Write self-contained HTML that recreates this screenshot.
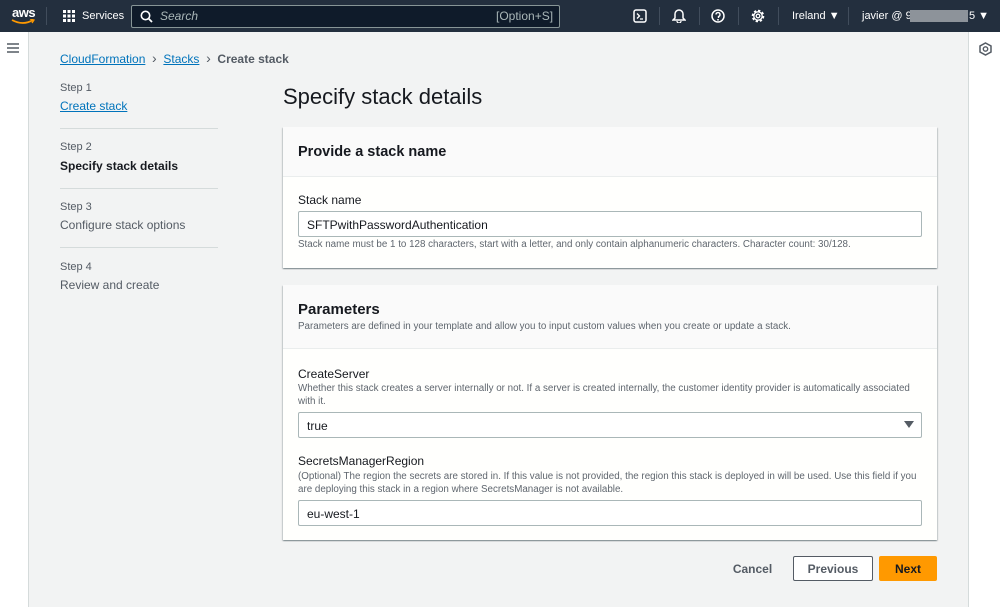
<!DOCTYPE html>
<html><head><style>
*{box-sizing:border-box;margin:0;padding:0}
body{width:1000px;height:607px;overflow:hidden;font-family:"Liberation Sans",sans-serif;background:#f2f3f3;position:relative;color:#16191f}
.nav{position:absolute;left:0;top:0;width:1000px;height:32px;background:#232f3e;color:#fff;font-size:11px}
.abs{position:absolute}
.sep{position:absolute;top:7px;width:1px;height:18px;background:#414d5c}
.ls{position:absolute;left:0;top:32px;width:29px;height:575px;background:#fff;border-right:1px solid #d5dbdb}
.rs{position:absolute;left:968px;top:32px;width:32px;height:575px;background:#fff;border-left:1px solid #d5dbdb}
a{color:#0073bb;text-decoration:underline}
.step{position:absolute;left:60px;font-size:11px;color:#545b64}
.sn{position:absolute;left:60px;font-size:12px;color:#545b64}
.div{position:absolute;left:60px;width:158px;height:1px;background:#d5dbdb}
.card{position:absolute;left:283px;width:654px;background:#fffffd;box-shadow:0 1px 1px rgba(0,28,36,.3),1px 1px 1px rgba(0,28,36,.15),-1px 1px 1px rgba(0,28,36,.15)}
.hd{background:#fafafa;border-bottom:1px solid #eaeded}
.lbl{position:absolute;left:15px;font-size:12px;color:#16191f}
.hlp{position:absolute;left:15px;font-size:9.8px;color:#5f666e;line-height:12.5px;width:625px}
.inp{position:absolute;left:15px;width:624px;height:26px;border:1px solid #aab7b8;border-radius:2px;background:#fff;font-size:12px;padding:6px 8px}
.btn{position:absolute;top:556px;height:25px;font-size:12px;font-weight:bold;text-align:center;line-height:27px;border-radius:2px}
</style></head><body>
<div class="nav">
  <div class="abs" style="left:12px;top:5px;font-size:13px;font-weight:bold;letter-spacing:-0.5px">aws</div>
  <svg class="abs" style="left:11px;top:19px" width="24" height="6"><path d="M1 1 Q12 7 22 1" stroke="#ff9900" stroke-width="1.8" fill="none"/><path d="M19 0 L23 1 L21 4" stroke="#ff9900" stroke-width="1.3" fill="none"/></svg>
  <div class="sep" style="left:46px"></div>
  <svg class="abs" style="left:63px;top:10px" width="12" height="12" fill="#fff"><rect x="0" y="0" width="3" height="3"/><rect x="4.5" y="0" width="3" height="3"/><rect x="9" y="0" width="3" height="3"/><rect x="0" y="4.5" width="3" height="3"/><rect x="4.5" y="4.5" width="3" height="3"/><rect x="9" y="4.5" width="3" height="3"/><rect x="0" y="9" width="3" height="3"/><rect x="4.5" y="9" width="3" height="3"/><rect x="9" y="9" width="3" height="3"/></svg>
  <div class="abs" style="left:82px;top:10px">Services</div>
  <div class="abs" style="left:131px;top:5px;width:429px;height:23px;border:1px solid #879596;border-radius:2px;background:#0f1b2a"></div>
  <svg class="abs" style="left:140px;top:10px" width="13" height="13"><circle cx="5.5" cy="5.5" r="4.2" stroke="#fff" stroke-width="1.6" fill="none"/><path d="M8.5 8.5 L12 12" stroke="#fff" stroke-width="1.8"/></svg>
  <div class="abs" style="left:160px;top:9px;font-size:12px;font-style:italic;color:#aab7b8">Search</div>
  <div class="abs" style="left:496px;top:9px;font-size:12px;color:#aab7b8">[Option+S]</div>
  <svg class="abs" style="left:633px;top:9px" width="14" height="14"><rect x="1" y="1" width="12" height="12" rx="2" stroke="#fff" stroke-width="1.5" fill="none"/><path d="M4 4.5 L6.5 7 L4 9.5 M7 10 H10" stroke="#fff" stroke-width="1.3" fill="none"/></svg>
  <div class="sep" style="left:659px"></div>
  <svg class="abs" style="left:672px;top:8px" width="14" height="15"><path d="M3 10 V6 a4 4 0 0 1 8 0 V10 L13 12 H1 Z" stroke="#fff" stroke-width="1.5" fill="none"/><path d="M5 13 a2 2 0 0 0 4 0" stroke="#fff" stroke-width="1.3" fill="none"/></svg>
  <div class="sep" style="left:699px"></div>
  <svg class="abs" style="left:711px;top:9px" width="14" height="14"><circle cx="7" cy="7" r="6" stroke="#fff" stroke-width="1.5" fill="none"/><path d="M5 5.5 a2 2 0 1 1 2.5 2 V9" stroke="#fff" stroke-width="1.4" fill="none"/><circle cx="7" cy="10.8" r=".9" fill="#fff"/></svg>
  <div class="sep" style="left:738px"></div>
  <svg class="abs" style="left:751px;top:9px" width="14" height="14"><circle cx="7" cy="7" r="5" stroke="#fff" stroke-width="2.6" stroke-dasharray="2.2 1.7" fill="none"/><circle cx="7" cy="7" r="4.2" stroke="#fff" stroke-width="1.3" fill="none"/><circle cx="7" cy="7" r="1.8" stroke="#fff" stroke-width="1.3" fill="none"/></svg>
  <div class="sep" style="left:778px"></div>
  <div class="abs" style="left:792px;top:10px">Ireland ▼</div>
  <div class="sep" style="left:848px"></div>
  <div class="abs" style="left:862px;top:10px">javier @ 90</div>
  <div class="abs" style="left:910px;top:10px;width:58px;height:12px;background:#8d939a"></div>
  <div class="abs" style="left:969px;top:10px">5 ▼</div>
</div>
<div class="ls"><svg class="abs" style="left:7px;top:11px" width="12" height="10"><path d="M0 1H12M0 5H12M0 9H12" stroke="#545b64" stroke-width="1.5"/></svg></div>
<div class="rs"><svg class="abs" style="left:10px;top:10px" width="13" height="14"><path d="M6.5 1 L12 4 V10 L6.5 13 L1 10 V4 Z" stroke="#545b64" stroke-width="1.5" fill="none"/><circle cx="6.5" cy="7" r="2.2" stroke="#545b64" stroke-width="1.4" fill="none"/></svg></div>

<div class="abs" style="left:60px;top:50px;font-size:12px;color:#545b64"><a>CloudFormation</a> &nbsp;<span style="font-size:14px">›</span>&nbsp; <a>Stacks</a> &nbsp;<span style="font-size:14px">›</span>&nbsp; <b style="font-weight:bold;color:#545b64">Create stack</b></div>

<div class="step" style="top:82px">Step 1</div><div class="sn" style="top:99px"><a>Create stack</a></div>
<div class="div" style="top:128px"></div>
<div class="step" style="top:141px">Step 2</div><div class="sn" style="top:159px;color:#16191f;font-weight:bold">Specify stack details</div>
<div class="div" style="top:188px"></div>
<div class="step" style="top:201px">Step 3</div><div class="sn" style="top:218px">Configure stack options</div>
<div class="div" style="top:247px"></div>
<div class="step" style="top:261px">Step 4</div><div class="sn" style="top:278px">Review and create</div>

<div class="abs" style="left:283px;top:84px;font-size:22px;color:#16191f">Specify stack details</div>

<div class="card" style="top:127px;height:141px">
  <div class="hd" style="height:50px"><div class="abs" style="left:15px;top:17px;font-size:14.5px;font-weight:bold">Provide a stack name</div></div>
  <div class="lbl" style="top:66px">Stack name</div>
  <div class="inp" style="top:84px">SFTPwithPasswordAuthentication</div>
  <div class="hlp" style="top:112px">Stack name must be 1 to 128 characters, start with a letter, and only contain alphanumeric characters. Character count: 30/128.</div>
</div>

<div class="card" style="top:285px;height:255px">
  <div class="hd" style="height:64px">
    <div class="abs" style="left:15px;top:16px;font-size:15px;font-weight:bold">Parameters</div>
    <div class="hlp" style="top:36px">Parameters are defined in your template and allow you to input custom values when you create or update a stack.</div>
  </div>
  <div class="lbl" style="top:82px">CreateServer</div>
  <div class="hlp" style="top:98px">Whether this stack creates a server internally or not. If a server is created internally, the customer identity provider is automatically associated with it.</div>
  <div class="inp" style="top:127px">true<svg class="abs" style="right:7px;top:8px" width="10" height="8"><path d="M0 0H10L5 7Z" fill="#545b64"/></svg></div>
  <div class="lbl" style="top:169px">SecretsManagerRegion</div>
  <div class="hlp" style="top:186px">(Optional) The region the secrets are stored in. If this value is not provided, the region this stack is deployed in will be used. Use this field if you are deploying this stack in a region where SecretsManager is not available.</div>
  <div class="inp" style="top:215px">eu-west-1</div>
</div>

<div class="btn" style="left:725px;width:55px;color:#545b64">Cancel</div>
<div class="btn" style="left:793px;width:80px;border:1px solid #545b64;background:#fff;color:#545b64;line-height:25px">Previous</div>
<div class="btn" style="left:879px;width:58px;background:#ff9900;color:#16191f">Next</div>
</body></html>
